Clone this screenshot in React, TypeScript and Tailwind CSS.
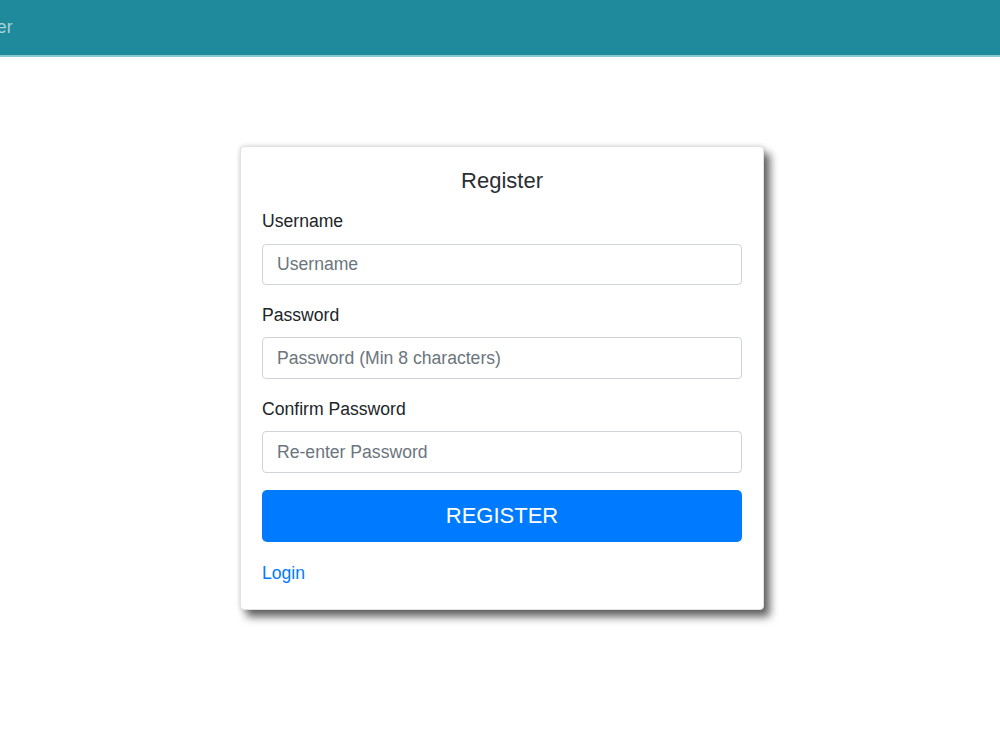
const fieldLabel = "block text-[17.6px] leading-[26.4px] text-[#212529] mb-[8.8px]";
const fieldInput =
  "block w-full h-[41.6px] px-[14px] rounded-[4px] border border-[#ced4da] bg-white text-[17.6px] text-[#495057] placeholder:text-[#6c757d] outline-none";

function Field({ label, placeholder, type }: { label: string; placeholder: string; type: string }) {
  return (
    <div className="mb-[17px]">
      <label className={fieldLabel}>{label}</label>
      <input type={type} placeholder={placeholder} className={fieldInput} />
    </div>
  );
}

export default function App() {
  return (
    <div
      className="min-h-[750px] bg-white"
      style={{ fontFamily: '"Liberation Sans", Arial, sans-serif' }}
    >
      <header className="h-[57px] bg-[#1f8a9b] border-b-2 border-[#8ccad1] overflow-hidden flex items-center">
        <span className="ml-[-53px] text-[17.6px] text-[#a6d2d8] whitespace-nowrap">Register</span>
      </header>

      <div className="pt-[89px]">
        <div className="ml-[240px] w-[524px] bg-white border border-[#e2e2e2] rounded-[4px] pt-[21px] px-[21px] pb-[23px] shadow-[0_0_5px_rgba(0,0,0,0.15),6px_7px_9px_rgba(0,0,0,0.6)]">
          <h5 className="text-center text-[22px] leading-[26.4px] text-[#2b2f33] mb-[14px]">Register</h5>

          <Field label="Username" placeholder="Username" type="text" />
          <Field label="Password" placeholder="Password (Min 8 characters)" type="password" />
          <Field label="Confirm Password" placeholder="Re-enter Password" type="password" />

          <button className="block w-full h-[52px] rounded-[5px] bg-[#007bff] text-white text-[22px] leading-[22px]">
            REGISTER
          </button>

          <a href="#" className="block mt-[18px] text-[17.6px] leading-[26.4px] text-[#007bff]">
            Login
          </a>
        </div>
      </div>
    </div>
  );
}
